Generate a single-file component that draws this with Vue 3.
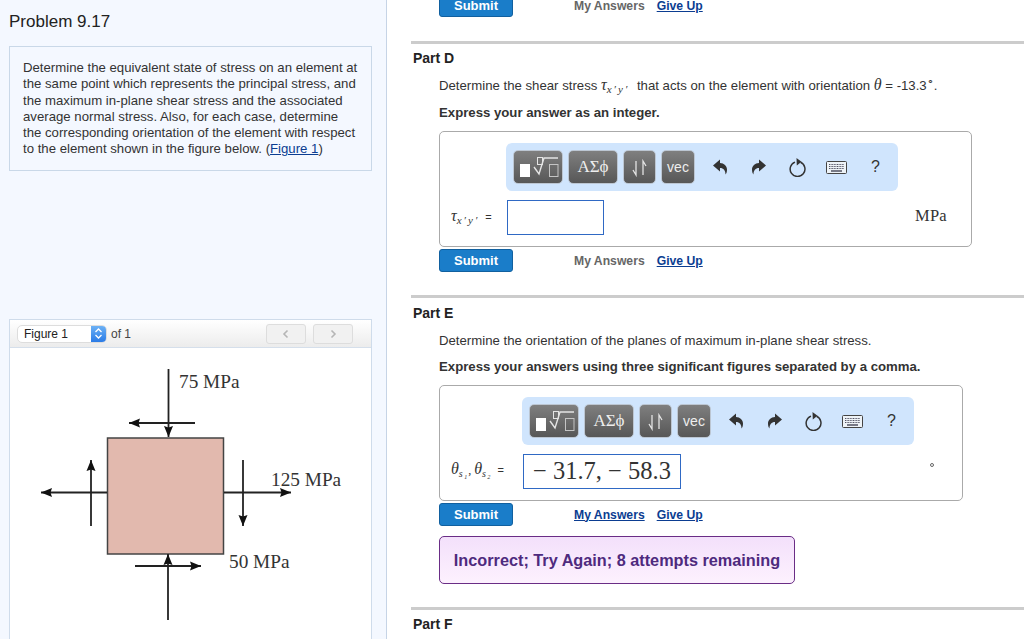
<script setup>
const tools = [
  { id: 'undo', w: 16, h: 16 },
  { id: 'redo', w: 16, h: 16 },
  { id: 'reset', w: 18, h: 19 },
  { id: 'kb', w: 21, h: 13 }
]
const arrows = [
  [168.5, 369, 168.5, 437],
  [195, 423, 129, 423],
  [107, 492.5, 41, 492.5],
  [91, 526, 91, 460],
  [224, 492.5, 291, 492.5],
  [243, 460, 243, 526],
  [168, 620, 168, 554],
  [135, 566, 201, 566]
]
function head(a) {
  const [x1, y1, x2, y2] = a
  const dx = Math.sign(x2 - x1), dy = Math.sign(y2 - y1)
  const l = 11, w = 4.5
  const bx = x2 - dx * l, by = y2 - dy * l
  return `${x2},${y2} ${bx - dy * w},${by - dx * w} ${bx + dx * 1.5},${by + dy * 1.5} ${bx + dy * w},${by + dx * w}`
}
</script>

<template>
  <div class="page">
    <svg class="defs" width="0" height="0" aria-hidden="true">
      <symbol id="undo" viewBox="0 0 16 16"><path d="M1 6.5 8 .5V4C12 4 15 7 15 10.5 15 12.5 14.5 14.5 13.5 15.5 13.5 11.5 11.5 9 8 9V12.5Z" /></symbol>
      <symbol id="redo" viewBox="0 0 16 16"><path d="M15 6.5 8 .5V4C4 4 1 7 1 10.5 1 12.5 1.5 14.5 2.5 15.5 2.5 11.5 4.5 9 8 9V12.5Z" /></symbol>
      <symbol id="reset" viewBox="0 0 18 19"><path d="M11.6 4.3A7.4 7.4 0 1 1 6 4.1" fill="none" stroke="currentColor" stroke-width="1.5" /><path d="M7.5 0 12.5 3.8 7.8 7.4Z" /></symbol>
      <symbol id="kb" viewBox="0 0 21 13">
        <rect x="0.5" y="0.5" width="20" height="12" rx="1" fill="#eef3f7" stroke="#444" />
        <path d="M3 3.5H18M3 5.5H18M3 7.5H18" stroke="#556" stroke-dasharray="1 .6" />
        <path d="M5 10H16" stroke="#445" stroke-width="1.4" />
      </symbol>
      <symbol id="sqrt" viewBox="0 0 50 34">
        <rect x="7" y="14" width="10" height="13" fill="#fff" />
        <rect x="24.5" y="7.5" width="5" height="7" fill="none" stroke="#e4e4e4" />
        <path d="M21 17 26 24 31 8H45" fill="none" stroke="#e4e4e4" stroke-width="1.4" />
        <rect x="36.5" y="14.5" width="8.5" height="12" fill="none" stroke="#c4c4c4" />
      </symbol>
      <symbol id="updown" viewBox="0 0 33 34">
        <path d="M13 11V25L10 20M20 25V11L23 16" fill="none" stroke="#e4e4e4" stroke-width="1.3" />
      </symbol>
    </svg>

    <aside class="left">
      <h1 class="title">Problem 9.17</h1>
      <div class="intro">
        Determine the equivalent state of stress on an element at<br />
        the same point which represents the principal stress, and<br />
        the maximum in-plane shear stress and the associated<br />
        average normal stress. Also, for each case, determine<br />
        the corresponding orientation of the element with respect<br />
        to the element shown in the figure below. (<a class="fig-link">Figure 1</a>)
      </div>
      <section class="figure">
        <div class="fig-head">
          <div class="select"><span class="select-text">Figure 1</span><span class="select-btn"><svg width="9" height="13" viewBox="0 0 9 13"><path d="M1.5 5 4.5 2 7.5 5M1.5 8 4.5 11 7.5 8" fill="none" stroke="#fff" stroke-width="1.3" /></svg></span></div>
          <span class="of">of 1</span>
          <div class="pager">
            <button class="page-btn"><svg width="8" height="10" viewBox="0 0 8 10"><path d="M5.5 1.5 2 5 5.5 8.5" fill="none" stroke="#b5b5b5" stroke-width="1.6" /></svg></button>
            <button class="page-btn"><svg width="8" height="10" viewBox="0 0 8 10"><path d="M2.5 1.5 6 5 2.5 8.5" fill="none" stroke="#b5b5b5" stroke-width="1.6" /></svg></button>
          </div>
        </div>
        <svg class="diagram" viewBox="10 348 361 291" width="361" height="291">
          <rect x="107.5" y="438" width="116" height="116" fill="#e2b9ae" stroke="#444" stroke-width="1.5" />
          <g v-for="(a, i) in arrows" :key="i">
            <line :x1="a[0]" :y1="a[1]" :x2="a[2]" :y2="a[3]" stroke="#222" stroke-width="1.8" />
            <polygon :points="head(a)" fill="#111" />
          </g>
          <text x="179" y="388" class="dtext">75 MPa</text>
          <text x="271" y="486" class="dtext">125 MPa</text>
          <text x="229" y="568" class="dtext">50 MPa</text>
        </svg>
      </section>
    </aside>

    <main class="right">
      <div class="actions first">
        <button class="submit">Submit</button>
        <span class="muted">My Answers</span>
        <a class="link">Give Up</a>
      </div>

      <section class="part part-d">
        <h2 class="part-title up">Part D</h2>
        <p class="prompt tall">Determine the shear stress <span class="math"><i class="tau">τ</i><sub>x′y′</sub></span> that acts on the element with orientation <i class="theta">θ</i> = -13.3<sup class="deg">∘</sup>.</p>
        <p class="hint">Express your answer as an integer.</p>
        <div class="box box-d">
          <div class="toolbar tb-d">
            <button class="tbtn w50"><svg width="50" height="34"><use href="#sqrt" /></svg></button>
            <button class="tbtn w50 greek">ΑΣϕ</button>
            <button class="tbtn w33"><svg width="33" height="34"><use href="#updown" /></svg></button>
            <button class="tbtn w34 vec">vec</button>
            <div class="tools">
              <span v-for="t in tools" :key="t.id" class="tool"><svg :width="t.w" :height="t.h"><use :href="'#' + t.id" /></svg></span>
              <span class="tool q">?</span>
            </div>
          </div>
          <div class="answer">
            <span class="label label-d"><i class="tau">τ</i><sub>x′y′</sub><span class="eq">=</span></span>
            <div class="input in-d"></div>
            <span class="unit">MPa</span>
          </div>
        </div>
        <div class="actions">
          <button class="submit">Submit</button>
          <span class="muted">My Answers</span>
          <a class="link">Give Up</a>
        </div>
      </section>

      <section class="part">
        <h2 class="part-title">Part E</h2>
        <p class="prompt">Determine the orientation of the planes of maximum in-plane shear stress.</p>
        <p class="hint">Express your answers using three significant figures separated by a comma.</p>
        <div class="box box-e">
          <div class="toolbar tb-e">
            <button class="tbtn w50"><svg width="50" height="34"><use href="#sqrt" /></svg></button>
            <button class="tbtn w50 greek">ΑΣϕ</button>
            <button class="tbtn w33"><svg width="33" height="34"><use href="#updown" /></svg></button>
            <button class="tbtn w34 vec">vec</button>
            <div class="tools">
              <span v-for="t in tools" :key="t.id" class="tool"><svg :width="t.w" :height="t.h"><use :href="'#' + t.id" /></svg></span>
              <span class="tool q">?</span>
            </div>
          </div>
          <div class="answer">
            <span class="label label-e"><i class="th">θ</i><sub class="ss">s₁</sub>, <i class="th">θ</i><sub class="ss">s₂</sub><span class="eq">=</span></span>
            <div class="input in-e">− 31.7, − 58.3</div>
            <span class="dot"></span>
          </div>
        </div>
        <div class="actions">
          <button class="submit">Submit</button>
          <a class="link my">My Answers</a>
          <a class="link">Give Up</a>
        </div>
        <div class="feedback">Incorrect; Try Again; 8 attempts remaining</div>
      </section>

      <section class="part">
        <h2 class="part-title up">Part F</h2>
      </section>
    </main>
  </div>
</template>

<style>
html, body { margin: 0; overflow: hidden; background: #fff; }
</style>

<style scoped>
.page {
  display: flex;
  width: 1024px;
  height: 639px;
  overflow: hidden;
  background: #fff;
  color: #333;
  font-family: "Liberation Sans", Arial, sans-serif;
  font-size: 13.2px;
}
.defs { position: absolute; }
.left {
  box-sizing: border-box;
  flex: none;
  width: 387px;
  padding: 0 14px 0 9px;
  background: #f4f8ff;
  border-right: 1px solid #c6d4e6;
}
.title {
  margin: 12px 0 15px;
  font-size: 17px;
  line-height: 19px;
  font-weight: 400;
  color: #222;
}
.intro {
  box-sizing: border-box;
  height: 125px;
  padding: 13px 13px 0;
  border: 1px solid #c9d8e8;
  line-height: 16.3px;
  white-space: nowrap;
}
.fig-link { color: #0b3d91; text-decoration: underline; }
.figure {
  margin-top: 148px;
  border: 1px solid #cfdceb;
  background: #fff;
  height: 330px;
}
.fig-head {
  box-sizing: border-box;
  display: flex;
  align-items: center;
  height: 28px;
  padding: 0 18px 0 7px;
  background: linear-gradient(#fff, #ececec);
  border-bottom: 1px solid #d5dfeb;
  font-size: 12px;
}
.select {
  display: flex;
  width: 90px;
  height: 18px;
  border: 1px solid #ddd;
  box-sizing: border-box;
  border-radius: 5px;
  overflow: hidden;
  background: #fff;
  color: #222;
}
.select-text { flex: 1; padding-left: 6px; line-height: 16px; }
.select-btn {
  width: 15px;
  display: flex;
  align-items: center;
  justify-content: center;
  background: linear-gradient(#6cb1f5, #2a7be6);
}
.of { margin-left: 4px; color: #444; }
.pager { margin-left: auto; display: flex; gap: 7px; }
.page-btn {
  display: flex;
  align-items: center;
  justify-content: center;
  width: 40px;
  height: 20px;
  padding: 0;
  border: 1px solid #ddd;
  border-radius: 3px;
  background: #f1f1f1;
}
.diagram { display: block; }
.dtext { font: 19.3px "Liberation Serif", "Times New Roman", serif; fill: #333; }
.right { flex: none; width: 613px; margin-left: 24px; padding: 0; }
.actions {
  display: flex;
  align-items: center;
  height: 23px;
  padding-left: 28px;
}
.actions.first { margin-top: -6px; }
.submit {
  box-sizing: border-box;
  width: 74px;
  height: 23px;
  padding: 0;
  border: 1px solid #11609f;
  border-radius: 3px;
  background: #1a7dc9;
  color: #fff;
  font: 700 13px "Liberation Sans", sans-serif;
}
.muted, .link { font-weight: 700; font-size: 12.2px; }
.muted { margin-left: 61px; color: #666; }
.link { margin-left: 12px; color: #0b3d91; text-decoration: underline; }
.link.my { margin-left: 61px; }
.part { margin-top: 23px; border-top: 3px solid #ccc; }
.part-d { margin-top: 24px; }
.part-title {
  margin: 7px 0 0 2px;
  font-size: 14px;
  line-height: 16px;
  font-weight: 700;
  color: #222;
}
.part-title.up { margin-top: 6px; }
.prompt { margin: 12px 0 0 28px; line-height: 16px; height: 16px; white-space: nowrap; }
.prompt.tall { height: 17px; }
.hint { margin: 10px 0 0 28px; line-height: 16px; font-weight: 700; }
.math { font-family: "Liberation Serif", serif; margin-right: 4px; }
.tau { font: italic 16px "Liberation Serif", serif; line-height: 0; }
sub { font: italic 11px "Liberation Serif", serif; vertical-align: -3px; line-height: 0; letter-spacing: 2px; }
.theta { font: italic 16px "Liberation Serif", serif; line-height: 0; }
.deg { font-size: 11px; line-height: 0; vertical-align: 5px; }
.box {
  box-sizing: border-box;
  height: 116px;
  margin: 10px 0 2px 28px;
  padding-top: 11px;
  border: 1px solid #aaa;
  border-radius: 5px;
  background: #fff;
}
.box-d { width: 533px; }
.box-e { width: 524px; }
.toolbar {
  box-sizing: border-box;
  display: flex;
  align-items: center;
  height: 48px;
  padding-left: 7px;
  background: #d0e5fd;
  border-radius: 6px;
}
.tb-d { width: 392px; margin-left: 66px; }
.tb-e { width: 392px; margin-left: 82px; }
.tbtn {
  box-sizing: border-box;
  height: 34px;
  margin-right: 5px;
  padding: 0;
  border: 1px solid #bcc6d2;
  border-radius: 5px;
  background: linear-gradient(#7f7f7f, #575757);
  color: #eee;
  overflow: hidden;
}
.tbtn svg { display: block; margin: -1px; }
.w50 { width: 50px; }
.w33 { width: 33px; margin-right: 5px; }
.w34 { width: 34px; margin-right: 0; }
.greek { font: 17px "Liberation Serif", serif; }
.vec { font: 14px "Liberation Sans", sans-serif; }
.tools { display: flex; margin-left: 5px; color: #333; }
.tool { display: flex; justify-content: center; align-items: center; width: 39px; height: 24px; fill: #333; }
.q { font: 16px/20px "Liberation Sans", sans-serif; color: #333; }
.answer { display: flex; align-items: center; margin-top: 9px; height: 35px; }
.label { display: block; padding: 0 0 2px 11px; white-space: nowrap; font-family: "Liberation Serif", serif; }
.label-d { width: 56px; box-sizing: border-box; }
.label-e { width: 72px; box-sizing: border-box; font-size: 12px; }
.eq { margin-left: 6px; font: 11px "Liberation Sans", sans-serif; }
.th { font: italic 16px "Liberation Serif", serif; line-height: 0; }
.ss { font-size: 10px; letter-spacing: 1px; }
.input { box-sizing: border-box; height: 35px; border: 1px solid #2f69c4; background: #fff; }
.in-d { width: 97px; margin-left: 11px; }
.in-e {
  width: 158px;
  margin-left: 11px;
  padding-left: 9px;
  font: 24.5px/31px "Liberation Serif", serif;
  color: #333;
  white-space: nowrap;
}
.unit { margin-left: auto; padding: 0 24px 3px 0; font: 16.5px "Liberation Serif", serif; letter-spacing: .3px; color: #333; }
.dot {
  box-sizing: border-box;
  align-self: flex-start;
  width: 4px;
  height: 4px;
  margin: 9px 28px 0 auto;
  border: 1px solid #666;
  border-radius: 50%;
}
.feedback {
  box-sizing: border-box;
  width: 356px;
  height: 48px;
  margin: 10px 0 0 28px;
  border: 1px solid #6a2d86;
  border-radius: 5px;
  background: linear-gradient(#f3e0fb, #fdf1fe);
  color: #4e2a7e;
  font-weight: 700;
  font-size: 16.25px;
  line-height: 46px;
  text-align: center;
}
</style>
